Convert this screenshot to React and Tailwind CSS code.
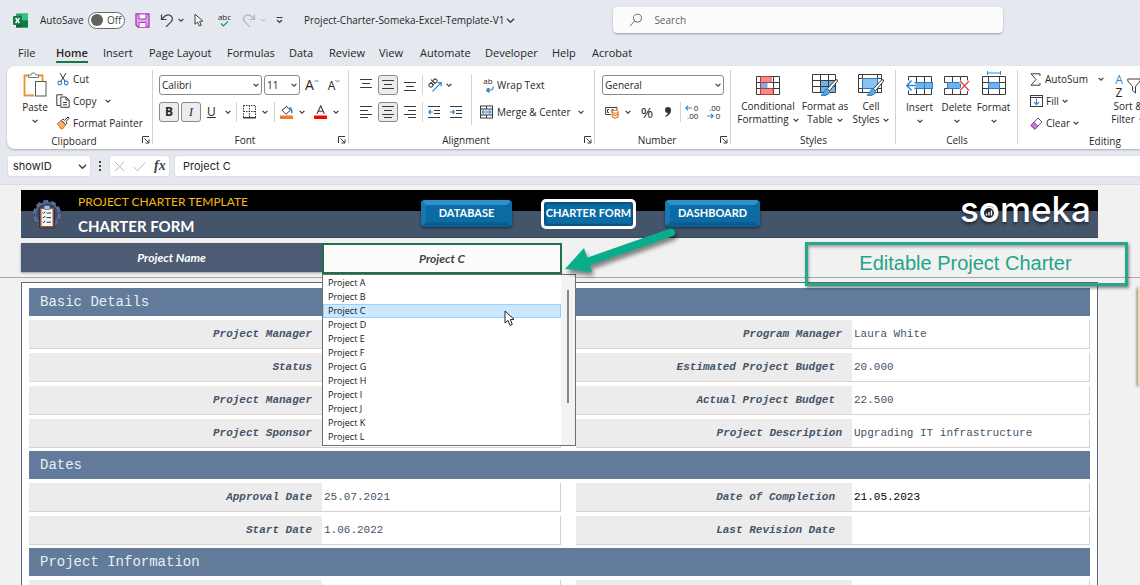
import React from "react";

const INK = "#3b3b3b";
const BLUE = "#2b88d8";

function Chev({ className = "", color = INK, w = 6 }) {
  return (
    <svg className={"shrink-0 " + className} width={w} height={w} viewBox="0 0 8 8" fill="none" aria-hidden="true">
      <path d="M0.8 2.4 L4 5.6 L7.2 2.4" stroke={color} strokeWidth={w > 7 ? 1.1 : 1.6} />
    </svg>
  );
}

function Svg({ w = 16, h = 16, vb, children, className = "" }) {
  return (
    <svg className={"shrink-0 " + className} width={w} height={h} viewBox={vb || `0 0 ${w} ${h}`} fill="none" aria-hidden="true">
      {children}
    </svg>
  );
}

function IconButton({ label, className = "", children }) {
  return (
    <button type="button" aria-label={label} className={"flex h-5 shrink-0 items-center justify-center " + className}>
      {children}
    </button>
  );
}

function Divider({ className = "" }) {
  return <span className={"h-5 w-px shrink-0 bg-[#d4d4d4] " + className} />;
}

function Launcher({ label }) {
  return (
    <button type="button" aria-label={label} className="absolute right-[3px] bottom-[5px]">
      <Svg w={8} h={8}>
        <path d="M0.5 7 V0.5 H7" stroke={INK} />
        <path d="M2.5 2.5 L6.8 6.8 M7 3.5 V7 H3.5" stroke={INK} />
      </Svg>
    </button>
  );
}

function Group({ title, className, launcher, children }) {
  return (
    <section aria-label={title} className={"relative flex h-full shrink-0 flex-col " + className}>
      <div className="flex-1">{children}</div>
      <div className={"h-4 text-center text-[10px] leading-[14px] " + (launcher ? "pr-3" : "")}>{title}</div>
      {launcher && <Launcher label={title + " settings"} />}
      <span className="absolute right-0 top-1 bottom-[5px] w-px bg-[#d4d4d4]" />
    </section>
  );
}

function Drop({ label, value, className }) {
  return (
    <span className={"relative block shrink-0 " + className}>
      <select aria-label={label} defaultValue={value} className="block h-5 w-full appearance-none rounded-[3px] border border-[#8a8a8a] bg-white px-[2px] text-[10px] leading-4">
        <option>{value}</option>
      </select>
      <Chev className="absolute right-[3px] top-[7px]" />
    </span>
  );
}

function Lines({ rows }) {
  return (
    <Svg w={12} h={14}>
      {rows.map(([x, y, w]) => (
        <path key={y} d={`M${x} ${y + 0.5} h${w}`} stroke={INK} />
      ))}
    </Svg>
  );
}

const topLines = [[0, 2, 12], [2, 6, 8], [0, 10, 12]];
const alignLeft = [[0, 1, 12], [0, 5, 8], [0, 9, 12], [0, 12, 8]];
const alignCenter = [[0, 1, 12], [2, 5, 8], [0, 9, 12], [2, 12, 8]];
const alignRight = [[0, 1, 12], [4, 5, 8], [0, 9, 12], [4, 12, 8]];

function Indent({ out }) {
  return (
    <Svg w={13} h={14}>
      <path d="M0 1.5 H12 M6 5.5 H12 M6 8.5 H12 M0 12.5 H12" stroke={INK} />
      {out ? (
        <path d="M0.8 7 H5 M2.6 5 L0.8 7 L2.6 9" stroke={BLUE} strokeWidth="1.2" />
      ) : (
        <path d="M0 7 H4.4 M2.6 5 L4.4 7 L2.6 9" stroke={BLUE} strokeWidth="1.2" />
      )}
    </Svg>
  );
}

function Brush() {
  return (
    <g>
      <path d="M25.5 8.2 L17.5 17.8 L15.2 15.8 L23.6 7 Q26 5.6 25.5 8.2Z" fill="#fff" stroke={INK} />
      <path d="M15.4 16 Q19 17.5 16.5 21 Q13.5 23.5 9 22.2 Q11.5 21 12 18.5 Q13 15.8 15.4 16Z" fill="#5aa9e6" stroke="#2b7cc4" />
    </g>
  );
}

function BigButton({ icon, lines, className, below }) {
  return (
    <button type="button" className={"flex shrink-0 flex-col items-center text-[10px] leading-[13px] " + className}>
      <span className="flex h-7 items-center">{icon}</span>
      {below ? (
        <>
          <span className="mt-[2px]">{lines[0]}</span>
          <Chev className="mt-1" />
        </>
      ) : (
        <>
          <span className="mt-px whitespace-nowrap">{lines[0]}</span>
          <span className="flex items-center gap-1 whitespace-nowrap">
            {lines[1]}
            <Chev />
          </span>
        </>
      )}
    </button>
  );
}

const grid = "M0.5 1.5 H23.5 V19.5 H0.5 Z M0.5 7.5 H23.5 M0.5 13.5 H23.5 M8.5 1.5 V19.5 M16.5 1.5 V19.5";

function TitleBar() {
  return (
    <header className="flex h-10 shrink-0 items-center text-[10px]">
      <Svg w={15} h={15} className="ml-[13px]">
        <rect x="3" y="0.5" width="12" height="14" rx="1" fill="#21a366" />
        <rect x="9" y="0.5" width="6" height="7" fill="#33c481" />
        <rect x="3" y="7.5" width="6" height="7" fill="#185c37" />
        <rect x="9" y="7.5" width="6" height="7" fill="#107c41" />
        <rect x="0" y="3" width="9" height="9" rx="1" fill="#107c41" />
        <path d="M2.6 5 L6.4 10 M6.4 5 L2.6 10" stroke="#fff" strokeWidth="1.4" />
      </Svg>
      <span id="autosave" className="ml-3 w-[47px]">AutoSave</span>
      <button type="button" role="switch" aria-checked="false" aria-labelledby="autosave" className="ml-px flex h-[17px] w-[37px] items-center gap-1 rounded-full border border-[#6a6a6a] bg-white pl-[2px] text-[10px] text-[#444]">
        <span className="size-3 rounded-full bg-[#616161]" />
        Off
      </button>
      <IconButton label="Save" className="ml-[10px]">
        <Svg w={15} h={15}>
          <path d="M1 1 H14 V14 H3 L1 12 Z" fill="#e3a5ea" stroke="#a33bb0" strokeWidth="1.3" />
          <path d="M4 1.5 V6 H11 V1.5" fill="#fff" stroke="#a33bb0" />
          <path d="M4 14 V9.5 H11 V14" fill="#fff" stroke="#a33bb0" />
        </Svg>
      </IconButton>
      <IconButton label="Undo" className="ml-[10px] gap-1">
        <Svg w={14} h={15}>
          <path d="M1.5 1.5 V6.5 H6.5" stroke={INK} strokeWidth="1.2" />
          <path d="M1.8 6.2 L5 3 Q8.5 0.6 11.3 3.2 Q13.6 6 11 8.8 L6 13.8" stroke={INK} strokeWidth="1.2" />
        </Svg>
        <Chev />
      </IconButton>
      <IconButton label="Select" className="ml-[10px]">
        <Svg w={10} h={14}>
          <path d="M1 1.2 L1 11.2 L3.6 9 L5.4 13 L7.2 12.1 L5.5 8.4 L8.9 8.1 Z" stroke={INK} fill="#fff" />
        </Svg>
      </IconButton>
      <IconButton label="Spelling" className="ml-[14px] w-[13px] flex-col">
        <span className="text-[8px] leading-[8px]">abc</span>
        <Svg w={9} h={6}><path d="M1 2.5 L3.3 5 L8 0.5" stroke="#1f9d55" strokeWidth="1.2" /></Svg>
      </IconButton>
      <IconButton label="Redo" className="ml-[11px] gap-1">
        <Svg w={14} h={15}>
          <g transform="translate(14 0) scale(-1 1)">
            <path d="M1.5 1.5 V6.5 H6.5" stroke="#b0b3b8" strokeWidth="1.2" />
            <path d="M1.8 6.2 L5 3 Q8.5 0.6 11.3 3.2 Q13.6 6 11 8.8 L6 13.8" stroke="#b0b3b8" strokeWidth="1.2" />
          </g>
        </Svg>
        <Chev color="#c2c5ca" />
      </IconButton>
      <IconButton label="Customize toolbar" className="ml-[10px]">
        <Svg w={7} h={8}><path d="M0.5 1.5 H6.5" stroke={INK} /><path d="M1 4 L3.5 6.5 L6 4" stroke={INK} strokeWidth="1.2" /></Svg>
      </IconButton>
      <button type="button" className="ml-[21px] flex shrink-0 items-center gap-[2px] whitespace-nowrap">
        Project-Charter-Someka-Excel-Template-V1
        <Chev w={9} />
      </button>
      <label className="ml-[98px] mr-[137px] flex h-[26px] flex-1 items-center gap-[11px] rounded-sm bg-[#fcfcfd] pl-4 shadow-[0_1px_2px_#9a9da3]">
        <Svg w={14} h={14}>
          <circle cx="8.5" cy="5.2" r="4" stroke="#666" />
          <path d="M5.6 8.2 L1 12.8" stroke="#666" />
        </Svg>
        <input aria-label="Search" placeholder="Search" className="min-w-0 flex-1 bg-transparent text-[10px] outline-none placeholder:text-[#616161]" />
      </label>
    </header>
  );
}

const tabs = [
  ["File", "w-[38px]"], ["Home", "w-[47px]"], ["Insert", "w-[46px]"], ["Page Layout", "w-[78px]"],
  ["Formulas", "w-[62px]"], ["Data", "w-10"], ["Review", "w-[50px]"], ["View", "w-[41px]"],
  ["Automate", "w-[65px]"], ["Developer", "w-[67px]"], ["Help", "w-10"], ["Acrobat", "w-[50px]"],
];

function Tabs() {
  return (
    <nav aria-label="Ribbon tabs" className="flex h-[26px] shrink-0 pl-[18px] text-[11px]">
      {tabs.map(([t, w]) => (
        <a key={t} href={"#" + t.toLowerCase().replace(" ", "-")} className={"flex shrink-0 items-start whitespace-nowrap " + w}>
          <span className={t === "Home" ? "border-b-2 border-[#107c41] pt-[5px] leading-4 font-semibold" : "pt-[5px] leading-4"}>{t}</span>
        </a>
      ))}
    </nav>
  );
}

function Ribbon() {
  return (
    <div className="ml-[7px] flex h-[83px] shrink-0 overflow-hidden rounded-l-lg bg-white shadow-[0_1px_2px_#a9acb2]">
      <Group title="Clipboard" className="w-[146px]" launcher>
        <div className="flex pt-[2px]">
          <button type="button" className="ml-4 mt-1 flex w-6 flex-col items-center text-[10px]">
            <Svg w={24} h={27}>
              <path d="M6 3.5 H1.5 V23.5 H11 M15 3.5 H19.5 V9" stroke="#e8912d" strokeWidth="1.8" />
              <path d="M5.5 5.5 V3 H8 Q8.2 0.8 10.5 0.8 Q12.8 0.8 13 3 H15.5 V5.5 Z" fill="#fff" stroke="#777" />
              <rect x="12.5" y="9.5" width="10.5" height="14.5" fill="#fff" stroke="#555" />
            </Svg>
            <span className="mt-px leading-[14px]">Paste</span>
            <Chev className="mt-1" />
          </button>
          <div className="ml-[9px] flex flex-col text-[10px]">
            <button type="button" className="flex h-[22px] items-center gap-[3px]">
              <Svg w={14} h={14}>
                <path d="M4 1 L9.5 10 M10 1 L4.5 10" stroke={INK} />
                <circle cx="3.8" cy="11" r="1.8" stroke={BLUE} strokeWidth="1.2" />
                <circle cx="10.2" cy="11" r="1.8" stroke={BLUE} strokeWidth="1.2" />
              </Svg>
              Cut
            </button>
            <button type="button" className="flex h-[22px] items-center gap-[3px]">
              <Svg w={14} h={14}>
                <path d="M4 11.5 H0.8 V0.8 H7" stroke={INK} />
                <path d="M4.8 3 H10 L13.2 6 V13.3 H4.8 Z M10 3 V6 H13 M7 8.5 H11 M7 10.8 H11" stroke={INK} />
              </Svg>
              Copy
              <Chev className="ml-[6px]" />
            </button>
            <button type="button" className="flex h-[22px] items-center gap-[3px] whitespace-nowrap">
              <Svg w={14} h={14}>
                <path d="M1 8 L5 4.5 L9.5 9 L6.5 13 L4 12 L3.5 10 Z" fill="#f8b26a" stroke="#d9711c" />
                <path d="M5.5 4.5 L7 3 L8.5 4.3 L12 1 L13.2 2.3 L9.8 5.6 L11.2 7.2 L9.7 8.6 Z" fill="#fff" stroke={INK} />
              </Svg>
              Format Painter
            </button>
          </div>
        </div>
      </Group>

      <Group title="Font" className="w-[196px]" launcher>
        <div className="flex flex-col gap-[5px] pt-2 pl-[6px]">
          <div className="flex h-[22px] items-center">
            <Drop label="Font name" value="Calibri" className="w-[103px]" />
            <Drop label="Font size" value="11" className="ml-[2px] w-9" />
            <IconButton label="Increase font size" className="ml-[5px] items-start">
              <span className="text-[14px] leading-5">A</span>
              <Svg w={5} h={4} className="mt-1"><path d="M0.5 3 L2.5 1 L4.5 3" stroke={BLUE} /></Svg>
            </IconButton>
            <IconButton label="Decrease font size" className="ml-[9px] items-start">
              <span className="text-[12px] leading-[22px]">A</span>
              <Svg w={5} h={4} className="mt-1"><path d="M0.5 1 L2.5 3 L4.5 1" stroke={BLUE} /></Svg>
            </IconButton>
          </div>
          <div className="flex h-[22px] items-center text-[12px]">
            <IconButton label="Bold" className="w-5 rounded-[3px] border border-[#8a8a8a] bg-[#ececec] font-bold">B</IconButton>
            <IconButton label="Italic" className="ml-[2px] w-5 rounded-[3px] border border-[#8a8a8a] bg-[#ececec] font-['Liberation_Serif',serif] italic">I</IconButton>
            <IconButton label="Underline" className="ml-[6px] gap-[9px]"><span className="underline">U</span><Chev /></IconButton>
            <Divider className="ml-[5px]" />
            <IconButton label="Borders" className="ml-[6px] gap-[5px]">
              <Svg w={14} h={14}>
                <path d="M0.5 0.5 H12.5 V12 M0.5 0.5 V12 M6.5 0.5 V12 M0.5 6.5 H12.5" stroke={INK} strokeDasharray="1.5 1" />
                <path d="M0 12.8 H13" stroke={INK} strokeWidth="1.4" />
              </Svg>
              <Chev />
            </IconButton>
            <Divider className="ml-[6px]" />
            <IconButton label="Fill color" className="ml-[5px] gap-[5px]">
              <Svg w={14} h={14}>
                <path d="M6 1 L10.5 5 L6 9.2 L2 5.2 L6.5 1.5" stroke={INK} />
                <path d="M9.5 2.5 Q12 3.5 11.8 8" stroke={BLUE} strokeWidth="1.6" />
                <rect x="0" y="10.5" width="13" height="3.5" fill="#ed7d31" />
              </Svg>
              <Chev />
            </IconButton>
            <IconButton label="Font color" className="ml-[9px] gap-[5px]">
              <Svg w={14} h={14}>
                <path d="M3 8.8 L6.7 0.8 L10.4 8.8 M4.2 6.3 H9.2" stroke={INK} strokeWidth="1.1" />
                <rect x="0" y="10.5" width="13" height="3.5" fill="#f00" />
              </Svg>
              <Chev />
            </IconButton>
          </div>
        </div>
      </Group>

      <Group title="Alignment" className="w-[246px]" launcher>
        <div className="flex pt-2 pl-[11px]">
          <div className="flex flex-col gap-[5px]">
            <div className="flex h-[22px] items-center">
              <IconButton label="Top align"><Lines rows={[[0, 1, 12], [2, 5, 8], [0, 9, 12]]} /></IconButton>
              <IconButton label="Middle align" className="ml-[6px] w-5 rounded-[3px] border border-[#8a8a8a] bg-[#ececec]"><Lines rows={topLines} /></IconButton>
              <IconButton label="Bottom align" className="ml-[6px]"><Lines rows={[[0, 4, 12], [2, 8, 8], [0, 12, 12]]} /></IconButton>
              <Divider className="ml-[6px]" />
              <IconButton label="Orientation" className="ml-[5px] gap-1">
                <Svg w={14} h={14}>
                  <g transform="rotate(-45 5 7)" stroke={INK} fill="none">
                    <circle cx="3.4" cy="5.6" r="1.9" />
                    <path d="M5.4 3.4 V7.8 M7.4 1.6 V7.8" />
                    <circle cx="9.4" cy="5.6" r="1.9" />
                  </g>
                  <path d="M4.5 13.3 L13 4.8 M9.6 4.6 H13.2 V8.2" stroke={BLUE} strokeWidth="1.2" />
                </Svg>
                <Chev />
              </IconButton>
            </div>
            <div className="flex h-[22px] items-center">
              <IconButton label="Align left"><Lines rows={alignLeft} /></IconButton>
              <IconButton label="Center" className="ml-[6px] w-5 rounded-[3px] border border-[#8a8a8a] bg-[#ececec]"><Lines rows={alignCenter} /></IconButton>
              <IconButton label="Align right" className="ml-[6px]"><Lines rows={alignRight} /></IconButton>
              <Divider className="ml-[6px]" />
              <IconButton label="Decrease indent" className="ml-[5px]"><Indent out /></IconButton>
              <IconButton label="Increase indent" className="ml-[9px]"><Indent /></IconButton>
            </div>
          </div>
          <span className="ml-2 h-[51px] w-px bg-[#d4d4d4]" />
          <div className="ml-2 flex flex-col gap-[5px] text-[10px]">
            <button type="button" className="flex h-[22px] items-center gap-[3px]">
              <span className="relative flex h-4 w-[14px] flex-col pl-[2px] text-[8px] leading-[8px]">
                <span>ab</span>
                <span>c</span>
                <Svg w={8} h={7} className="absolute bottom-0 right-0"><path d="M7 0.5 Q8 4.5 1.5 4.5 M3.5 2.5 L1.3 4.5 L3.5 6.5" stroke={BLUE} strokeWidth="1.2" /></Svg>
              </span>
              Wrap Text
            </button>
            <button type="button" className="flex h-[22px] items-center gap-1 whitespace-nowrap">
              <Svg w={13} h={14}>
                <rect x="0.5" y="1" width="12" height="12" stroke={INK} />
                <rect x="1" y="4" width="11" height="6" fill="#cfe6f8" />
                <path d="M0.5 4 H12.5 M0.5 10 H12.5 M6.5 1 V4 M6.5 10 V13" stroke={INK} />
                <path d="M2 7 H11 M3.8 5.3 L2 7 L3.8 8.7 M9.2 5.3 L11 7 L9.2 8.7" stroke={BLUE} />
              </Svg>
              Merge &amp; Center
              <Chev className="ml-[3px]" />
            </button>
          </div>
        </div>
      </Group>

      <Group title="Number" className="w-[136px]" launcher>
        <div className="flex flex-col gap-[5px] pt-2 pl-[7px]">
          <div className="flex h-[22px] items-center">
            <Drop label="Number format" value="General" className="w-[122px]" />
          </div>
          <div className="flex h-[22px] items-center">
            <IconButton label="Accounting format" className="ml-[3px] gap-[6px]">
              <Svg w={14} h={14}>
                <path d="M12 5 V2.5 H0.6 V9.5 H6" stroke={INK} />
                <path d="M4 4.5 H2.5 V7.5 H4 M8.5 4.5 H7 V7.5" stroke={INK} />
                <path d="M7.2 6.8 V12.2 Q10.2 14.4 13.2 12.2 V6.8" fill="#fde3c8" stroke="#e07a1f" />
                <ellipse cx="10.2" cy="6.8" rx="3" ry="1.4" fill="#fff" stroke="#e07a1f" />
                <path d="M7.2 9.5 Q10.2 11.4 13.2 9.5" stroke="#e07a1f" />
              </Svg>
              <Chev />
            </IconButton>
            <IconButton label="Percent style" className="ml-[9px] w-[14px] text-[15px]">%</IconButton>
            <IconButton label="Comma style" className="ml-[10px]">
              <Svg w={8} h={12}><circle cx="4" cy="4" r="3" fill="#333" /><path d="M6.8 3.5 Q7.5 8.5 1.5 11 L1.2 10.3 Q4.5 8 4.2 5.5 Z" fill="#333" /></Svg>
            </IconButton>
            <Divider className="ml-2" />
            <IconButton label="Increase decimal" className="ml-1 w-[14px]">
              <span className="relative flex flex-col items-end text-[8px] leading-[8px]">
                <span className="pl-2">0</span>
                <span>.00</span>
                <Svg w={7} h={6} className="absolute -left-px top-px"><path d="M0.8 3 H7 M3 0.8 L0.8 3 L3 5.2" stroke={BLUE} strokeWidth="1.2" /></Svg>
              </span>
            </IconButton>
            <IconButton label="Decrease decimal" className="ml-2 w-[14px]">
              <span className="relative flex flex-col items-end text-[8px] leading-[8px]">
                <span>.00</span>
                <span className="pl-2">0</span>
                <Svg w={7} h={6} className="absolute -left-px bottom-px"><path d="M0 3 H6.2 M4 0.8 L6.2 3 L4 5.2" stroke={BLUE} strokeWidth="1.2" /></Svg>
              </span>
            </IconButton>
          </div>
        </div>
      </Group>

      <Group title="Styles" className="w-[165px]">
        <div className="flex pt-[5px] pl-[5px]">
          <BigButton className="w-[64px]" lines={["Conditional", "Formatting"]} icon={
            <Svg w={24} h={21}>
              <rect x="4.5" y="1.5" width="10" height="6" fill="#f28b8b" />
              <rect x="4.5" y="7.5" width="7" height="6" fill="#6fb3ea" />
              <rect x="4.5" y="13.5" width="12" height="6" fill="#f28b8b" />
              <path d="M0.5 1.5 H23.5 V19.5 H0.5 Z M0.5 7.5 H23.5 M0.5 13.5 H23.5 M17.5 1.5 V19.5" stroke={INK} />
              <path d="M4.5 1.5 V19.5 M4.5 1.5 H15 V7.5 H4.5 M4.5 13.5 H17 V19.5 H4.5" stroke="#c33" />
            </Svg>} />
          <BigButton className="w-[50px]" lines={["Format as", "Table"]} icon={
            <Svg w={26} h={24}>
              <rect x="9" y="8" width="14" height="11" fill="#6fb3ea" />
              <path d={grid} stroke={INK} />
              <Brush />
            </Svg>} />
          <BigButton className="w-[42px]" lines={["Cell", "Styles"]} icon={
            <Svg w={26} h={24}>
              <path d="M0.5 1.5 H23.5 V19.5 H0.5 Z M0.5 5.5 H23.5 M0.5 15.5 H23.5 M4.5 1.5 V19.5 M19.5 1.5 V19.5" stroke={INK} />
              <rect x="4.5" y="5.5" width="15" height="10" fill="#8cc3ef" stroke="#2b7cc4" />
              <Brush />
            </Svg>} />
        </div>
      </Group>

      <Group title="Cells" className="w-[122px]">
        <div className="flex pt-[5px] pl-[5px]">
          <BigButton below className="w-[37px]" lines={["Insert"]} icon={
            <Svg w={27} h={21}>
              <path d="M2.5 1.5 H25.5 V19.5 H2.5 Z M10.5 1.5 V19.5 M18.5 1.5 V19.5" stroke={INK} />
              <rect x="9" y="7.5" width="17.5" height="6" fill="#6fb3ea" stroke="#2b7cc4" />
              <path d="M18.5 7.5 V13.5" stroke="#2b7cc4" />
              <path d="M5.5 5 L0.8 10.5 L5.5 16 M0.8 10.5 H10" stroke="#fff" strokeWidth="4" />
              <path d="M5.5 5.5 L0.8 10.5 L5.5 15.5 M0.8 10.5 H10" stroke={BLUE} strokeWidth="1.6" />
            </Svg>} />
          <BigButton below className="w-[37px]" lines={["Delete"]} icon={
            <Svg w={26} h={21}>
              <path d="M0.5 7.5 V1.5 H23.5 V7.5 M0.5 13.5 V19.5 H23.5 V14 M8.5 1.5 V7.5 M16.5 1.5 V7.5 M8.5 13.5 V19.5 M16.5 13.5 V19.5 M0.5 7.5 H4 M0.5 13.5 H4" stroke={INK} />
              <rect x="3.5" y="7.5" width="13" height="6" fill="#6fb3ea" stroke="#2b7cc4" />
              <path d="M16 6 L25 15.5 M25 6 L16 15.5" stroke="#fff" strokeWidth="3" />
              <path d="M16 6 L25 15.5 M25 6 L16 15.5" stroke="#e04848" strokeWidth="1.3" />
            </Svg>} />
          <BigButton below className="w-[37px]" lines={["Format"]} icon={
            <Svg w={24} h={28}>
              <path d="M5.5 0 V4 M18.5 0 V4 M5.5 2 H18.5" stroke={BLUE} />
              <path d="M0.5 5.5 H23.5 V23.5 H0.5 Z M0.5 11.5 H23.5 M0.5 17.5 H23.5 M6.5 5.5 V23.5 M17.5 5.5 V23.5" stroke={INK} />
              <rect x="6.5" y="11.5" width="11" height="6" fill="#6fb3ea" stroke="#2b7cc4" />
            </Svg>} />
        </div>
      </Group>

      <Group title="Editing" className="w-[174px]">
        <div className="flex pl-3 pt-[2px] text-[10px]">
          <div className="flex w-[76px] flex-col">
            <button type="button" className="flex h-[22px] items-center gap-1">
              <Svg w={11} h={13}><path d="M10 3 V0.8 H1 L6 6.5 L1 12.2 H10 V10" stroke={INK} /></Svg>
              AutoSum
              <Chev className="ml-[6px]" />
            </button>
            <button type="button" className="flex h-[22px] items-center gap-[3px]">
              <Svg w={13} h={12}>
                <rect x="0.5" y="0.5" width="12" height="11" stroke={INK} />
                <path d="M0.5 2.5 H12.5" stroke={INK} />
                <path d="M6.5 3.5 V9.5 M4 7.2 L6.5 9.7 L9 7.2" stroke={BLUE} strokeWidth="1.2" />
              </Svg>
              Fill
              <Chev />
            </button>
            <button type="button" className="flex h-[22px] items-center gap-[3px]">
              <Svg w={13} h={13}>
                <path d="M1 8.5 L8 1 L12 5 L5 12.2 Z" fill="#fff" stroke="#7a3d99" />
                <path d="M1 8.5 L4 5.3 L8 9.2 L5 12.2 Z" fill="#c77fdb" stroke="#8e3fa8" />
              </Svg>
              Clear
              <Chev />
            </button>
          </div>
          <button type="button" className="ml-1 flex w-9 flex-col items-center leading-[13px]">
            <span className="flex h-8 items-center gap-1 pt-1">
              <span className="flex flex-col text-[12px] leading-[13px]">
                <span className="text-[#2b88d8]">A</span>
                <span>Z</span>
              </span>
              <Svg w={14} h={16}><path d="M0.8 1 H13.2 V3 L8.5 8.5 V15 L5.5 12.5 V8.5 L0.8 3 Z" stroke={INK} /></Svg>
            </span>
            <span className="whitespace-nowrap">Sort &amp;</span>
            <span className="flex items-center gap-1">Filter <Chev /></span>
          </button>
        </div>
      </Group>
    </div>
  );
}

function FormulaBar() {
  return (
    <div className="ml-[7px] mt-[6px] flex h-[22px] shrink-0 items-center font-[Inter,sans-serif] text-[11px]">
      <label className="relative block">
        <input aria-label="Name box" defaultValue="showID" className="block h-[22px] w-[84px] rounded-[3px] border border-[#dcdfe4] bg-white pl-[5px]" />
        <Chev w={9} className="absolute right-1 top-[7px]" />
      </label>
      <span className="ml-2 flex w-[3px] flex-col gap-[2px]">
        <span className="size-[2px] bg-[#444]" />
        <span className="size-[2px] bg-[#444]" />
        <span className="size-[2px] bg-[#444]" />
      </span>
      <div className="ml-[7px] flex h-[22px] w-[61px] items-center gap-[8px] rounded-[3px] border border-[#dcdfe4] bg-white pl-1">
        <button type="button" aria-label="Cancel"><Svg w={11} h={11}><path d="M1 1 L10 10 M10 1 L1 10" stroke="#b5b5b5" /></Svg></button>
        <button type="button" aria-label="Enter"><Svg w={13} h={11}><path d="M0.8 6 L4.5 9.8 L12.2 1.5" stroke="#b5b5b5" /></Svg></button>
        <button type="button" aria-label="Insert function" className="font-['Liberation_Serif',serif] text-[14px] leading-5 font-bold text-[#444] italic">fx</button>
      </div>
      <input aria-label="Formula" defaultValue="Project C" className="ml-1 h-[22px] min-w-0 flex-1 rounded-l-[3px] border border-r-0 border-[#dcdfe4] bg-white pl-2 text-[11px]" />
    </div>
  );
}

function ClipboardGear() {
  return (
    <Svg w={32} h={34}>
      <circle cx="16" cy="17" r="12.6" fill="#2c3654" stroke="#5d6b99" strokeWidth="3" strokeDasharray="5 2.9" />
      <circle cx="16" cy="17" r="11.4" fill="#3d4a70" stroke="#5d6b99" strokeWidth="1.4" />
      <rect x="8.5" y="10" width="15" height="21" rx="1" fill="#8a5a44" stroke="#3a2a2a" />
      <rect x="10.5" y="12" width="11" height="17" fill="#f6f6f6" />
      <rect x="13" y="8.5" width="6" height="4" rx="1" fill="#8ecbe8" stroke="#33415c" strokeWidth="0.6" />
      <path d="M11.6 15.5 l1 1 l1.6 -2 M11.6 20 l1 1 l1.6 -2 M11.6 24.8 l1 1 l1.6 -2 M15.6 16 H20 M15.6 20.6 H20 M15.6 25.2 H20" stroke="#333" />
    </Svg>
  );
}

function NavButton({ active, children, className }) {
  const box = "flex h-[27px] items-center justify-center rounded-[4px] border-[5px] border-t-[#2a93cf] border-r-[#0f6aa2] border-b-[#0b5e91] border-l-[#1678b2] bg-[#0b6ca4] font-[Lato,sans-serif] text-[11px] font-bold text-white shadow-[0_1px_3px_#0008] ";
  const face = active
    ? "flex h-[30px] items-center justify-center rounded-[5px] border-[3px] border-white bg-[#0b6ca4] font-[Lato,sans-serif] text-[11px] font-bold text-white shadow-[inset_0_0_2px_2px_#08527f] "
    : box;
  return (
    <button type="button" className={face + "whitespace-nowrap " + className}>
      {children}
    </button>
  );
}

function Banner() {
  return (
    <div className="flex h-12 items-center border-b border-[#3a475a] bg-[linear-gradient(#000_21px,#44546a_21px)] pl-[10px] pr-[7px]">
      <ClipboardGear />
      <div className="ml-[15px] w-[343px] shrink-0 font-[Lato,sans-serif]">
        <p className="text-[12px] leading-6 text-[#f5b915]">PROJECT CHARTER TEMPLATE</p>
        <h1 className="text-[15px] font-bold leading-6 text-white">CHARTER FORM</h1>
      </div>
      <nav aria-label="Sheets" className="flex items-center gap-[29px]">
        <NavButton className="w-[91px]">DATABASE</NavButton>
        <NavButton active className="w-[95px]">CHARTER FORM</NavButton>
        <NavButton className="w-[95px]">DASHBOARD</NavButton>
      </nav>
      <div className="ml-auto pb-[10px] font-[Inter,sans-serif] text-[35px] font-medium leading-[36px] text-white [text-shadow:0_2px_3px_#0008]">
        s
        <span className="relative">
          o
          <Svg w={14} h={14} className="absolute bottom-[10px] left-1/2 -translate-x-1/2">
            <circle cx="7" cy="7" r="6.5" fill="#fff" />
            <circle cx="7" cy="7" r="5" fill="#1d2430" />
            <path d="M4.5 9.5 V7.5 M7 9.5 V6 M9.5 9.5 V4.5" stroke="#fff" strokeWidth="1.4" />
          </Svg>
        </span>
        meka
      </div>
    </div>
  );
}

const options = ["A", "B", "C", "D", "E", "F", "G", "H", "I", "J", "K", "L"];

function ProjectPicker() {
  return (
    <div className="relative w-60 shrink-0">
      <input aria-label="Project Name" defaultValue="Project C" className="block h-[31px] w-full border-2 border-[#1e7145] bg-[#fcfcfc] text-center font-[Lato,sans-serif] text-[12px] font-bold italic text-[#444] outline-none" />
      <div className="absolute left-0 top-[31px] z-10 flex h-[172px] w-[254px] border border-[#707070] bg-white">
        <ul role="listbox" aria-label="Projects" className="flex-1 pt-px text-[9px] leading-[14px] text-[#111]">
          {options.map((o) => (
            <li key={o} role="option" aria-selected={o === "C"} className={"h-[14px] pl-[5px] " + (o === "C" ? "bg-[#cce8ff] outline-1 -outline-offset-1 outline-[#99d1ff]" : "")}>
              {"Project " + o}
            </li>
          ))}
        </ul>
        <div className="flex w-[14px] justify-center bg-[#f3f3f3] pt-[15px]">
          <span className="h-[113px] w-[2px] bg-[#868686]" />
        </div>
      </div>
      <Svg w={11} h={17} className="absolute left-[182px] top-[67px] z-20">
        <path d="M1 1 L1 13 L4 10.4 L6 15.4 L8.3 14.4 L6.3 9.6 L10 9.3 Z" fill="#fff" stroke="#222" />
      </Svg>
    </div>
  );
}

const sections = [
  ["Basic Details", [
    ["Project Manager", "", "Program Manager", "Laura White"],
    ["Status", "", "Estimated Project Budget", "20.000"],
    ["Project Manager", "", "Actual Project Budget", "22.500"],
    ["Project Sponsor", "", "Project Description", "Upgrading IT infrastructure"],
  ]],
  ["Dates", [
    ["Approval Date", "25.07.2021", "Date of Completion", "21.05.2023"],
    ["Start Date", "1.06.2022", "Last Revision Date", ""],
  ]],
  ["Project Information", [["", "", "", ""]]],
];

function Section({ title, rows }) {
  const th = "bg-[#ececec] text-right font-bold italic text-[#44546a] border-b border-[#d9d3d6] ";
  const td = "border-b border-r border-[#d5d0d4] bg-white pl-[2px] text-left ";
  return (
    <section>
      <h2 className="h-7 bg-[#627b9b] pl-[11px] text-[14px] leading-7 text-[#e9eef5]">{title}</h2>
      <table className="-mb-px w-full table-fixed border-separate border-spacing-x-0 border-spacing-y-1 text-[11px] leading-4">
        <colgroup>
          <col className="w-[293px]" />
          <col className="w-[239px]" />
          <col className="w-[15px]" />
          <col className="w-[276px]" />
          <col />
        </colgroup>
        <tbody>
          {rows.map((r, i) => (
            <tr key={i} className="h-[29px]">
              <th scope="row" className={th + "pr-[10px]"}>{r[0]}</th>
              <td className={td + "text-[#44546a]"}>{r[1]}</td>
              <td />
              <th scope="row" className={th + (r[2] === "Program Manager" || r[2] === "Project Description" ? "pr-[10px]" : "pr-[17px]")}>{r[2]}</th>
              <td className={td + (r[2] === "Date of Completion" ? "text-black" : "text-[#44546a]")}>{r[3]}</td>
            </tr>
          ))}
        </tbody>
      </table>
    </section>
  );
}

function Sheet() {
  return (
    <main className="relative mt-[7px] min-h-0 flex-1 border-t border-[#dcdcdc] bg-[#f1f1f1] pl-[21px] pr-[42px] pt-[5px]">
      <Banner />
      <div className="mt-[5px] flex h-[38px]">
        <div className="flex h-[29px] shrink-0 grow-0 basis-[301px] items-center justify-center bg-[#4d5c74] font-[Lato,sans-serif] text-[12px] font-bold italic text-white shadow-[0_1px_2px_#999]">
          Project Name
        </div>
        <ProjectPicker />
      </div>
      <div className="-ml-[21px] -mr-[42px] -mt-1 border-t border-[#a8a8a8]" />
      <div className="mt-1 border border-[#5a6980] bg-white px-[7px] pt-[5px] font-['Liberation_Mono',monospace]">
        {sections.map(([t, rows]) => (
          <Section key={t} title={t} rows={rows} />
        ))}
      </div>

      <Svg w={120} h={54} className="absolute left-[562px] top-[40px] z-20 overflow-visible drop-shadow-[2px_4px_2px_#0007]">
        <path d="M22 38 L109 7.5" stroke="#08ae8c" strokeWidth="8" strokeLinecap="round" />
        <path d="M3 44 L22 23 L30 47 Z" fill="#08ae8c" />
      </Svg>
      <div className="absolute left-[805px] right-3 top-[57px] z-20 flex h-11 items-center justify-center border-[3px] border-[#25a98c] pr-[2px] pb-[2px] font-['Liberation_Sans',sans-serif] text-[20px] text-[#1fa588] shadow-[1px_2px_3px_#0007,inset_1px_2px_3px_#0005]">
        Editable Project Charter
      </div>
      <span className="absolute right-0 top-[102px] h-[98px] w-[2px] bg-[#efe0a0] shadow-[-1px_1px_3px_#0009]" />
    </main>
  );
}

export default function App() {
  return (
    <div className="flex h-screen flex-col overflow-hidden bg-[#e5e8ee] font-['Open_Sans',sans-serif] text-[#262626]">
      <TitleBar />
      <Tabs />
      <Ribbon />
      <FormulaBar />
      <Sheet />
    </div>
  );
}
